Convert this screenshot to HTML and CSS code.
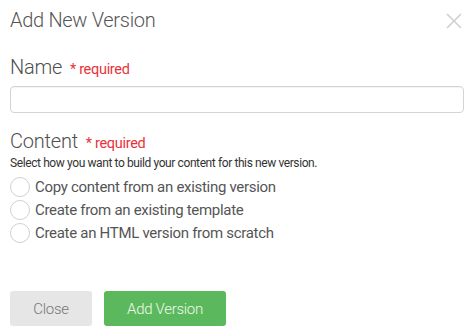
FILE: index.html
```html
<!DOCTYPE html>
<html lang="en">
<head>
  <meta charset="UTF-8">
  <title>Add New Version</title>
  <link rel="stylesheet" href="styles.css">
</head>
<body>
  <div class="modal">
    <div class="modal-header">
      <h2 class="modal-title">Add New Version</h2>
      <button class="close-x" aria-label="Close">
        <svg width="16" height="16" viewBox="0 0 16 16">
          <path d="M1 1L15 15M15 1L1 15" stroke="#cfcfcf" stroke-width="1.6" fill="none"/>
        </svg>
      </button>
    </div>

    <div class="field">
      <label class="field-label">Name <span class="req">* required</span></label>
      <input class="text-input" type="text">
    </div>

    <div class="field content-field">
      <label class="field-label">Content <span class="req">* required</span></label>
      <p class="hint">Select how you want to build your content for this new version.</p>
      <div class="options">
        <label class="option"><span class="radio"></span>Copy content from an existing version</label>
        <label class="option"><span class="radio"></span>Create from an existing template</label>
        <label class="option"><span class="radio"></span>Create an HTML version from scratch</label>
      </div>
    </div>

    <div class="modal-footer">
      <button class="btn btn-close">Close</button>
      <button class="btn btn-add">Add Version</button>
    </div>
  </div>
</body>
</html>
```

FILE: styles.css
```css
body {
  margin: 0;
  font-family: Roboto, 'Liberation Sans', sans-serif;
  background: #fff;
  color: #555;
}

.modal {
  padding: 8px 10px 0 10px;
}

.modal-header {
  display: flex;
  justify-content: space-between;
  align-items: flex-start;
}

.modal-title {
  margin: 0;
  font-size: 20px;
  line-height: 24px;
  font-weight: 300;
  letter-spacing: -0.3px;
  color: #555;
}

.close-x {
  border: none;
  background: none;
  padding: 0;
  margin: 5px 2px 0 0;
  width: 16px;
  height: 16px;
  cursor: pointer;
}

.field {
  margin-top: 23px;
}

.field-label {
  display: block;
  font-size: 20px;
  line-height: 24px;
  font-weight: 300;
  letter-spacing: -0.2px;
  color: #4f4f4f;
}

.req {
  font-size: 14.5px;
  font-weight: 400;
  letter-spacing: -0.3px;
  color: #e8323a;
  margin-left: 3px;
}

.text-input {
  display: block;
  box-sizing: border-box;
  width: 100%;
  height: 27px;
  margin-top: 4px;
  border: 1px solid #d4d4d4;
  border-radius: 4px;
  box-shadow: inset 0 1px 1px rgba(0, 0, 0, 0.05);
}

.content-field {
  margin-top: 16px;
}

.hint {
  margin: 0;
  font-size: 12px;
  line-height: 15px;
  letter-spacing: -0.4px;
  color: #333;
}

.options {
  margin-top: 6px;
  display: flex;
  flex-direction: column;
  gap: 3px;
}

.option {
  display: flex;
  align-items: center;
  gap: 5px;
  font-size: 15px;
  line-height: 20px;
  letter-spacing: -0.3px;
  color: #555;
}

.radio {
  box-sizing: border-box;
  width: 20px;
  height: 20px;
  border: 1px solid #d0d0d0;
  border-radius: 50%;
  background: #fff;
}

.modal-footer {
  display: flex;
  gap: 12px;
  margin-top: 48px;
}

.btn {
  height: 35px;
  border: none;
  border-radius: 3px;
  font-family: Roboto, 'Liberation Sans', sans-serif;
  font-size: 15px;
  font-weight: 300;
  letter-spacing: -0.3px;
  cursor: pointer;
}

.btn-close {
  width: 82px;
  background: #e6e6e6;
  color: #777;
}

.btn-add {
  width: 122px;
  background: #5cb85c;
  color: #eef8ee;
}
```
